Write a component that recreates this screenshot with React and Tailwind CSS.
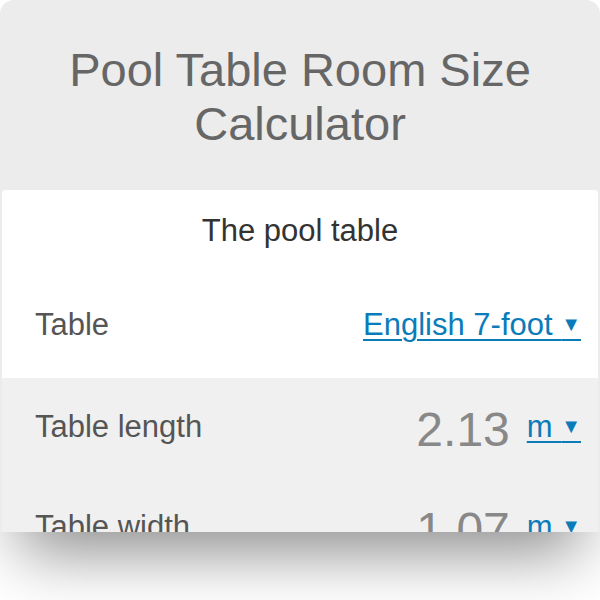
export default function App() {
  return (
    <div className="w-[600px] h-[600px] bg-white overflow-hidden font-[family-name:Liberation_Sans,Arial,sans-serif]">
      <div className="h-[532px] rounded-t-[14px] bg-[#ececec] px-[2px] overflow-hidden shadow-[0_40px_60px_-20px_rgba(0,0,0,0.45)]">
        <h1 className="h-[190px] pt-[43px] text-center text-[47px] leading-[54px] text-[#666666] font-normal">
          Pool Table Room Size
          <br />
          Calculator
        </h1>

        <div className="bg-white rounded-t-[4px]">
          <h2 className="h-[82px] pt-[23px] text-center text-[31px] leading-[36px] text-[#333333] font-normal">
            The pool table
          </h2>
          <div className="h-[106px] flex items-center justify-between pl-[33px] pr-[17px]">
            <span className="text-[31px] leading-[36px] text-[#555555]">Table</span>
            <span className="text-[31px] leading-[36px] text-[#0b7cba] underline decoration-2 underline-offset-[4px]">
              English 7-foot <span className="text-[20px] leading-none align-[4px]">▼</span>
            </span>
          </div>
        </div>

        <div className="bg-[#f0f0f0]">
          <div className="h-[98px] flex items-center justify-between pl-[33px] pr-[17px]">
            <span className="text-[31px] leading-[36px] text-[#555555]">Table length</span>
            <div className="flex items-center gap-[17px]">
              <span className="pt-[5px] text-[48px] leading-[54px] text-[#888888]">2.13</span>
              <span className="text-[31px] leading-[36px] text-[#0b7cba] underline decoration-2 underline-offset-[4px]">
                m <span className="text-[20px] leading-none align-[4px]">▼</span>
              </span>
            </div>
          </div>
          <div className="h-[102px] flex items-center justify-between pl-[33px] pr-[17px]">
            <span className="text-[31px] leading-[36px] text-[#555555]">Table width</span>
            <div className="flex items-center gap-[17px]">
              <span className="pt-[5px] text-[48px] leading-[54px] text-[#888888]">1.07</span>
              <span className="text-[31px] leading-[36px] text-[#0b7cba] underline decoration-2 underline-offset-[4px]">
                m <span className="text-[20px] leading-none align-[4px]">▼</span>
              </span>
            </div>
          </div>
        </div>
      </div>
    </div>
  );
}
